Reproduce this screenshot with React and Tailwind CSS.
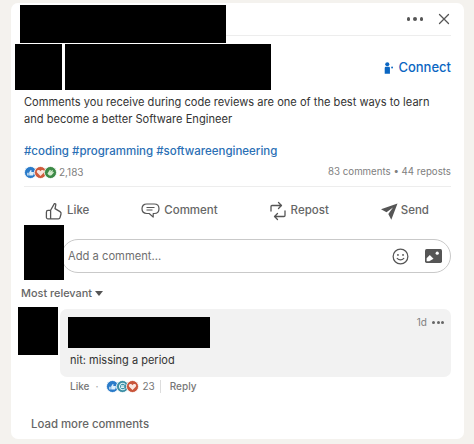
import React from "react";

function Reaction({ color, kind, className = "" }) {
  return (
    <svg viewBox="0 0 12 12" className={"w-[13px] h-[13px] " + className}>
      <circle cx="6" cy="6" r="5.6" fill={color} stroke="#ffffff" strokeWidth="0.8" />
      {kind === "like" && <path d="M3 6.2h1.3v2.6H3zM4.8 8.8V5.8L6.2 3.6c.6 0 .8.5.7 1L6.7 5.5h2c.4 0 .6.4.5.7l-.6 2.2c-.1.3-.3.4-.6.4z" fill="#dceefb" />}
      {kind === "heart" && <path d="M6 9.2 3 6.3C2.2 5.4 2.7 3.8 4 3.8c.9 0 1.6.5 2 1.1.4-.6 1.1-1.1 2-1.1 1.3 0 1.8 1.6 1 2.5z" fill="#fbe6df" />}
      {kind === "clap" && <path d="M3.2 7 5.4 3.4l1 .5-.6 1.6 1.8-1.7.8.7-1.4 1.6 1.6-.9.5.9-2.2 2.4c-1 .7-2.6.4-3.7-1.5z" fill="#d7ecd0" />}
      {kind === "cheer" && <path d="M8.6 4.2A3 3 0 1 0 8.6 7.8M4.6 5.4h3M4.6 6.8h3" fill="none" stroke="#dff3f7" strokeWidth="1" />}
    </svg>
  );
}

function ActionButton({ icon, label, className = "" }) {
  return (
    <div className={"flex items-center " + className}>
      {icon}
      <span className="text-[11.5px] font-medium text-[#666666]">{label}</span>
    </div>
  );
}

function Redact({ className }) {
  return <div className={"absolute bg-black " + className} />;
}

export default function App() {
  return (
    <div
      className="relative w-[474px] h-[444px] overflow-hidden bg-[#f4f2ee] pt-[3px] pl-[11px] text-[#333333]"
      style={{ fontFamily: "Inter, 'Liberation Sans', sans-serif" }}
    >
      <div className="w-[453px] h-[436px] bg-white rounded-[7px] flex flex-col">
        {/* header */}
        <div className="mx-[13px] h-[33px] shrink-0 border-b border-[#ededed] flex items-center justify-end gap-[15px] pr-[1px]">
          <div className="flex gap-[3px]">
            <span className="w-[3.5px] h-[3.5px] rounded-full bg-[#555555]" />
            <span className="w-[3.5px] h-[3.5px] rounded-full bg-[#555555]" />
            <span className="w-[3.5px] h-[3.5px] rounded-full bg-[#555555]" />
          </div>
          <svg viewBox="0 0 12 12" className="w-[12px] h-[12px]" fill="none" stroke="#555555" strokeWidth="1.3" strokeLinecap="round">
            <path d="M1.5 1.5 10.5 10.5M10.5 1.5 1.5 10.5" />
          </svg>
        </div>

        {/* author row */}
        <div className="h-[58px] shrink-0 mx-[13px] flex items-center justify-end">
          <div className="flex items-center gap-[4px] pt-[5px]">
            <svg viewBox="0 0 10 14" className="w-[10px] h-[12px]" fill="#0a66c2">
              <circle cx="3" cy="2.6" r="2.4" />
              <path d="M0 7c0-1 .7-1.6 1.6-1.6h3c.9 0 1.5.6 1.5 1.6v6.6H0z" />
              <circle cx="8.6" cy="6.4" r="1.1" />
            </svg>
            <span className="text-[13px] font-medium text-[#0a66c2]">Connect</span>
          </div>
        </div>

        {/* body */}
        <div className="mx-[13px] text-[11.1px] leading-[17px] text-[#333333] shrink-0">
          <p>Comments you receive during code reviews are one of the best ways to learn</p>
          <p>and become a better Software Engineer</p>
        </div>
        <div className="mx-[13px] mt-[15px] text-[11.5px] leading-[17px] font-medium text-[#2a6fb5] shrink-0">
          #coding #programming #softwareengineering
        </div>

        {/* stats */}
        <div className="mx-[13px] h-[27px] shrink-0 border-b border-[#ededed] flex items-center justify-between pb-[1px]">
          <div className="flex items-center">
            <Reaction color="#2a7bc9" kind="like" />
            <Reaction color="#cf5b3c" kind="heart" className="-ml-[3px]" />
            <Reaction color="#3d8a47" kind="clap" className="-ml-[3px]" />
            <span className="ml-[2px] text-[10px] text-[#808080]">2,183</span>
          </div>
          <span className="text-[9.7px] text-[#808080]">83 comments • 44 reposts</span>
        </div>

        {/* actions */}
        <div className="h-[48px] shrink-0 ml-[34px] mr-[35px] flex items-center justify-between">
          <ActionButton
            className="gap-[4px]"
            label="Like"
            icon={
              <svg viewBox="0 0 18 18" className="w-[18px] h-[18px]" fill="none" stroke="#555555" strokeWidth="1.3" strokeLinejoin="round">
                <path d="M5.6 8.2 9.4 1.6c1.2-.3 1.6.7 1.3 1.7L10 6.6l5 3c1 .7 1.3 1.5 1 2.4l-1 3.6c-.2.8-.8 1.2-1.6 1.2H3c-1 0-1.6-.7-1.6-1.6v-5c0-1 .6-1.8 1.6-1.8h2.6v8.200" />
              </svg>
            }
          />
          <ActionButton
            className="gap-[4px]"
            label="Comment"
            icon={
              <svg viewBox="0 0 19 16" className="w-[19px] h-[16px]" fill="none" stroke="#555555" strokeWidth="1.2" strokeLinejoin="round">
                <path d="M5.800 1h7.400c2.800 0 4.800 1.700 4.800 4.700 0 3-2 4.800-4.800 4.800h-1v3.600l-4-3.600H5.800C3 10.500 1 8.700 1 5.700 1 2.700 3 1 5.800 1z" />
                <path d="M5.500 4.500h8M5.500 7h6" />
              </svg>
            }
          />
          <ActionButton
            className="gap-[5px]"
            label="Repost"
            icon={
              <svg viewBox="0 0 16 20" className="w-[16px] h-[20px]" fill="none" stroke="#555555" strokeWidth="1.3" strokeLinejoin="round" strokeLinecap="round">
                <path d="M1 10V5.500c0-.6.4-1 1-1h9M8.500 1.500l3 3-3 3" />
                <path d="M15 10v4.500c0 .6-.4 1-1 1H5M7.500 12.500l-3 3 3 3" />
              </svg>
            }
          />
          <ActionButton
            className="gap-[3px]"
            label="Send"
            icon={
              <svg viewBox="0 0 17 17" className="w-[17px] h-[17px]" fill="#555555">
                <path d="M16.500.500 0 6.200l5.500 3L12 4.500 7.300 11l3 5.800z" />
              </svg>
            }
          />
        </div>

        {/* add comment */}
        <div className="h-[34px] shrink-0 ml-[50px] mr-[13px] mt-[4px] rounded-full border border-[#c9c9c9] flex items-center pl-[6px] pr-[8px]">
          <span className="text-[11.2px] text-[#6f6f6f] flex-1">Add a comment...</span>
          <svg viewBox="0 0 18 18" className="w-[17px] h-[17px] mr-[16px]" fill="none" stroke="#555555" strokeWidth="1.300">
            <circle cx="9" cy="9" r="7.800" />
            <circle cx="6.300" cy="7.300" r="1" fill="#555555" stroke="none" />
            <circle cx="11.700" cy="7.300" r="1" fill="#555555" stroke="none" />
            <path d="M5.500 11c1.800 2 5.200 2 7 0" strokeLinecap="round" />
          </svg>
          <svg viewBox="0 0 16 13" className="w-[17px] h-[14px]">
            <rect width="16" height="13" rx="1.500" fill="#555555" />
            <circle cx="11.500" cy="3.800" r="1.500" fill="#ffffff" />
            <path d="M1.500 8.500 4.500 5.500 8 9 4 11.500H1.500z" fill="#ffffff" />
          </svg>
        </div>

        {/* sort */}
        <div className="mt-[12px] ml-[10px] h-[16px] shrink-0 flex items-center gap-[3px]">
          <span className="text-[10.9px] font-medium text-[#666666]">Most relevant</span>
          <svg viewBox="0 0 8 5" className="w-[8px] h-[5px]" fill="#555555"><path d="M0 0h8L4 5z" /></svg>
        </div>

        {/* comment */}
        <div className="mt-[8px] ml-[49px] mr-[13px] h-[68px] shrink-0 rounded-[7px] bg-[#f2f2f2] flex flex-col pl-[10px] pr-[7px]">
          <div className="flex justify-end items-center gap-[5px] pt-[6px] h-[20px]">
            <span className="text-[10px] text-[#808080]">1d</span>
            <div className="flex gap-[1.500px]">
              <span className="w-[3px] h-[3px] rounded-full bg-[#666666]" />
              <span className="w-[3px] h-[3px] rounded-full bg-[#666666]" />
              <span className="w-[3px] h-[3px] rounded-full bg-[#666666]" />
            </div>
          </div>
          <p className="mt-[23px] text-[11px] leading-[17px] text-[#333333]">nit: missing a period</p>
        </div>

        {/* comment actions */}
        <div className="ml-[59px] h-[18px] shrink-0 flex items-center text-[10px] font-medium text-[#777777]">
          <span>Like</span>
          <span className="ml-[6px] mr-[8px] text-[#aaaaaa]">·</span>
          <Reaction color="#2a7bc9" kind="like" />
          <Reaction color="#3b8ea5" kind="cheer" className="-ml-[3px]" />
          <Reaction color="#c9553a" kind="heart" className="-ml-[3px]" />
          <span className="ml-[3px] font-normal">23</span>
          <span className="ml-[5px] w-px h-[13px] bg-[#dddddd]" />
          <span className="ml-[9px]">Reply</span>
        </div>

        {/* load more */}
        <div className="mt-[21px] ml-[20px] text-[11.4px] font-medium text-[#666666]">Load more comments</div>
      </div>

      {/* redaction blocks lying over the content */}
      <Redact className="left-[20px] top-[5px] w-[206px] h-[38px]" />
      <Redact className="left-[15px] top-[44px] w-[47px] h-[46px]" />
      <Redact className="left-[65px] top-[44px] w-[206px] h-[46px]" />
      <Redact className="left-[24px] top-[225px] w-[40px] h-[55px]" />
      <Redact className="left-[18px] top-[307px] w-[40px] h-[48px]" />
      <Redact className="left-[68px] top-[317px] w-[142px] h-[31px]" />
    </div>
  );
}
